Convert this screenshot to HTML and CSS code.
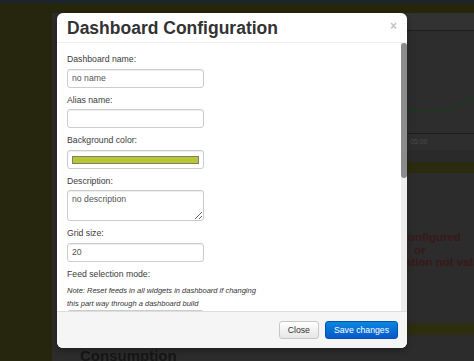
FILE: index.html
```html
<!DOCTYPE html>
<html lang="en">
<head>
<meta charset="utf-8">
<title>Dashboard Configuration</title>
<link rel="stylesheet" href="styles.css">
</head>
<body>
<div class="topbar"></div>
<div class="layout">
  <aside class="sidebar"></aside>
  <main class="main">
    <div class="right-col">
      <section class="chart-widget">
        <div class="chart-head"></div>
        <div class="chart-plot">
          <svg width="180" height="102" viewBox="0 0 180 102">
            <polyline points="0,81 146,80 155,78 163,76 168,72 171,69 175,70 180,68" fill="none" stroke="#1d3b1b" stroke-width="1.5"/>
          </svg>
        </div>
        <div class="chart-axis"><span>05:00</span></div>
        <div class="chart-foot"></div>
        <div class="chart-bar"></div>
      </section>
      <section class="notice">
        <span>Not configured</span>
        <span>or</span>
        <span>Configuration not valid</span>
      </section>
      <div class="olive-bar"></div>
    </div>
    <h2 class="section-title">Consumption</h2>
  </main>
</div>

<div class="modal">
  <div class="modal-header">
    <h3 class="modal-title">Dashboard Configuration</h3>
    <span class="close">×</span>
  </div>
  <div class="modal-body">
    <form class="form">
      <label class="field-label">Dashboard name:</label>
      <input class="input" type="text" value="no name">
      <label class="field-label">Alias name:</label>
      <input class="input" type="text" value="">
      <label class="field-label">Background color:</label>
      <div class="input color-input"><span class="swatch"></span></div>
      <label class="field-label">Description:</label>
      <textarea class="input textarea">no description</textarea>
      <label class="field-label">Grid size:</label>
      <input class="input" type="text" value="20">
      <label class="field-label">Feed selection mode:</label>
      <p class="note">Note: Reset feeds in all widgets in dashboard if changing<br>this part way through a dashboard build</p>
      <select class="input"><option>Feed name</option><option>Feed id</option></select>
      <label class="field-label">Height:</label>
      <input class="input" type="text" value="600">
    </form>
    <div class="scrollbar"><div class="scroll-thumb"></div></div>
  </div>
  <div class="modal-footer">
    <button class="btn" type="button">Close</button>
    <button class="btn btn-primary" type="button">Save changes</button>
  </div>
</div>
</body>
</html>
```

FILE: styles.css
```css
* { box-sizing: border-box; }
html, body { margin: 0; padding: 0; }
body {
  width: 474px;
  height: 361px;
  overflow: hidden;
  position: relative;
  background: #26260e;
  font-family: "Liberation Sans", Arial, sans-serif;
}
.topbar { height: 3px; background: #1b2530; }
.layout { display: flex; height: 358px; }
.sidebar { width: 52px; flex: none; }
.main {
  flex: 1;
  margin-top: 10px;
  background: #2c2c2c;
  display: flex;
  flex-direction: column;
  overflow: hidden;
}
.right-col { display: flex; flex-direction: column; align-items: flex-end; }
.chart-widget { width: 180px; }
.chart-head { height: 18px; background: #323232; border-bottom: 1px solid #1f1f1f; }
.chart-plot { height: 103px; background: #2d2d2d; border-bottom: 1px solid #1e1e1e; }
.chart-plot svg { display: block; }
.chart-axis {
  height: 16px;
  background: #2e2e2e;
  padding-left: 116px;
  font-size: 7px;
  line-height: 15px;
  color: #4c4c4c;
}
.chart-foot { height: 12px; background: #2a2a2a; }
.chart-bar { height: 11px; background: #2a2b0f; }
.notice {
  margin-top: 58px;
  width: 108px;
  display: flex;
  flex-direction: column;
  align-items: center;
  white-space: nowrap;
  font-weight: bold;
  font-size: 11.5px;
  line-height: 12.5px;
  color: #381919;
}
.olive-bar { margin-top: 54.5px; width: 180px; height: 12px; background: #2d2e10; }
.section-title {
  margin: 11.5px 0 0 28px;
  font-size: 15px;
  line-height: 18px;
  font-weight: bold;
  color: #161616;
}

/* modal */
.modal {
  position: absolute;
  left: 57px;
  top: 13px;
  width: 350px;
  height: 335px;
  background: #fff;
  border-radius: 6px;
  box-shadow: 0 3px 7px rgba(0,0,0,.3);
  display: flex;
  flex-direction: column;
  overflow: hidden;
  color: #333;
}
.modal-header {
  height: 30px;
  flex: none;
  border-bottom: 1px solid #eee;
  display: flex;
  align-items: center;
  justify-content: space-between;
  padding: 0 10px;
}
.modal-title { margin: 0; font-size: 17.5px; line-height: 20px; font-weight: bold; color: #333; }
.close { font-size: 12px; line-height: 1; font-weight: bold; color: #c4c4c4; margin-bottom: 4px; }
.modal-body {
  flex: 1;
  min-height: 0;
  display: flex;
  overflow: hidden;
}
.form {
  flex: 1;
  margin: 0;
  padding: 10px 0 0 10px;
  overflow: hidden;
}
.scrollbar { width: 6px; flex: none; background: #ededed; }
.scroll-thumb { height: 135px; background: #8b8b8b; border-radius: 3px; }
.field-label {
  display: block;
  font-size: 8.7px;
  line-height: 12px;
  margin-bottom: 3.5px;
  color: #3a3a3a;
}
.input {
  display: block;
  width: 137px;
  height: 19px;
  margin: 0 0 6px;
  padding: 0 4px;
  border: 1px solid #ccc;
  border-radius: 3px;
  box-shadow: inset 0 1px 1px rgba(0,0,0,.075);
  background: #fff;
  font: 8.7px "Liberation Sans", Arial, sans-serif;
  color: #555;
}
.textarea { height: 31px; padding: 3px 4px; resize: vertical; }
.color-input { padding: 5px 4px; }
.swatch { display: block; height: 8px; background: #b8c535; border: 1px solid #80806a; }
.note {
  margin: 4px 0 0;
  font-size: 7.5px;
  font-style: italic;
  line-height: 13px;
  color: #333;
}
.modal-footer {
  height: 37px;
  flex: none;
  background: #f5f5f5;
  border-top: 1px solid #ddd;
  display: flex;
  justify-content: flex-end;
  align-items: center;
  gap: 6px;
  padding: 0 9px;
}
.btn {
  height: 18px;
  padding: 0 8px;
  font: 8.7px "Liberation Sans", Arial, sans-serif;
  border-radius: 3px;
  border: 1px solid #c8c8c8;
  background: linear-gradient(#ffffff, #e6e6e6);
  color: #333;
}
.btn-primary {
  background: linear-gradient(#0a87de, #0758c9);
  border-color: #0550b5;
  color: #fff;
}
```
